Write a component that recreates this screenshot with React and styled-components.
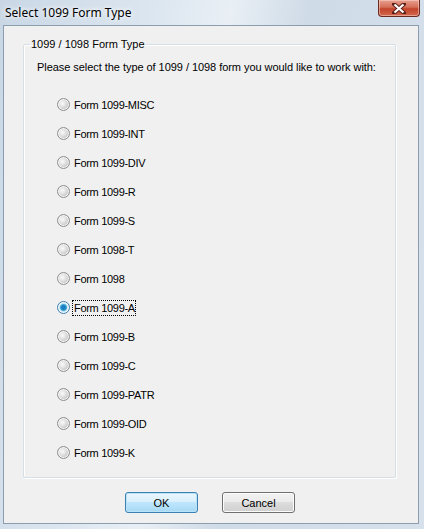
import React, { useState } from 'react';
import styled, { createGlobalStyle } from 'styled-components';

const Global = createGlobalStyle`
  html, body { margin: 0; padding: 0; }
  body {
    width: 424px;
    height: 529px;
    overflow: hidden;
    font-family: "Liberation Sans", Arial, sans-serif;
  }
`;

const Window = styled.div`
  width: 424px;
  height: 529px;
  box-sizing: border-box;
  display: flex;
  flex-direction: column;
  background: linear-gradient(100deg, #c9d7e5 0%, #dce6f0 30%, #e9eff5 45%, #cfdbe7 60%, #d6e1ec 100%);
  padding: 0 5px 5px 3px;
`;

const TitleBar = styled.div`
  height: 25px;
  display: flex;
  align-items: flex-start;
  justify-content: space-between;
`;

const Title = styled.div`
  font-family: "Noto Sans", "Open Sans", sans-serif;
  font-size: 12px;
  color: #000;
  padding: 4px 0 0 2px;
  text-shadow: 0 0 6px #fff, 0 0 4px #fff;
`;

const CloseButton = styled.div`
  width: 42px;
  height: 17px;
  margin-right: -1px;
  box-sizing: border-box;
  border: 1px solid #6b2a22;
  border-top: none;
  border-radius: 0 0 4px 4px;
  background: linear-gradient(180deg, #e8a08f 0%, #d46e58 45%, #c2432a 55%, #d0684e 100%);
  box-shadow: inset 0 0 0 1px rgba(255, 220, 210, 0.5);
  display: flex;
  align-items: center;
  justify-content: center;
`;

const Client = styled.div`
  flex: 1;
  background: #f0f0f0;
  border: 1px solid #8d9db0;
  display: flex;
  flex-direction: column;
  padding: 0 22px 0 19px;
`;

const Group = styled.fieldset`
  margin: 12px 0 0 0;
  padding: 0 0 0 13px;
  height: 440px;
  box-sizing: border-box;
  border: 1px solid #d5dfe5;
  box-shadow: inset 1px 1px 0 #fff, 1px 1px 0 #fff;
  border-radius: 2px;
`;

const Legend = styled.legend`
  font-size: 11px;
  color: #000;
  padding: 0 1px 0 1px;
  margin-left: -7px;
`;

const Prompt = styled.div`
  font-size: 11px;
  color: #000;
  margin-top: 11px;
  margin-bottom: 17px;
  letter-spacing: -0.05px;
`;

const List = styled.div`
  display: grid;
  grid-auto-rows: 29px;
  padding-left: 20px;
`;

const Row = styled.label`
  display: flex;
  align-items: center;
  gap: 2px;
  font-size: 11px;
  color: #000;
  cursor: default;
`;

const Radio = styled.span`
  width: 11px;
  height: 11px;
  border-radius: 50%;
  border: 1px solid ${p => (p.$on ? '#3c7fb1' : '#8e8f8f')};
  background: ${p =>
    p.$on
      ? 'radial-gradient(circle at 50% 50%, #1b7fbf 0 2px, #3fa9d8 3px, #bfe3f4 4px, #eaf6fc 5px)'
      : 'radial-gradient(circle at 40% 40%, #f4f4f4 0 1px, #dcdcdc 4px, #c6c6c6 6px)'};
  box-shadow: inset 0 0 0 1px #f6f6f6;
  flex: none;
`;

const Caption = styled.span`
  padding: 1px 0 1px 1px;
  border: 1px dotted ${p => (p.$focus ? '#000' : 'transparent')};
  letter-spacing: -0.3px;
`;

const Buttons = styled.div`
  display: flex;
  justify-content: center;
  gap: 24px;
  margin-top: 14px;
  padding-left: 1px;
`;

const Button = styled.button`
  width: 73px;
  height: 21px;
  box-sizing: border-box;
  font-family: "Liberation Sans", Arial, sans-serif;
  font-size: 11px;
  color: #000;
  border-radius: 3px;
  border: 1px solid ${p => (p.$default ? '#3c7fb1' : '#707070')};
  background: ${p =>
    p.$default
      ? 'linear-gradient(180deg, #eaf6fd 0%, #d9f0fc 45%, #bee6fd 50%, #a7d9f5 100%)'
      : 'linear-gradient(180deg, #f2f2f2 0%, #ebebeb 45%, #dddddd 50%, #cfcfcf 100%)'};
  box-shadow: inset 0 0 0 1px ${p => (p.$default ? '#b9e3f9' : '#fcfcfc')};
  padding: 0;
`;

const forms = [
  'Form 1099-MISC',
  'Form 1099-INT',
  'Form 1099-DIV',
  'Form 1099-R',
  'Form 1099-S',
  'Form 1098-T',
  'Form 1098',
  'Form 1099-A',
  'Form 1099-B',
  'Form 1099-C',
  'Form 1099-PATR',
  'Form 1099-OID',
  'Form 1099-K',
];

export default function App() {
  const [selected, setSelected] = useState('Form 1099-A');
  return (
    <Window>
      <Global />
      <TitleBar>
        <Title>Select 1099 Form Type</Title>
        <CloseButton>
          <svg width="14" height="11" viewBox="0 0 14 11">
            <path d="M2 1 L12 10 M12 1 L2 10" stroke="#5a1f17" strokeWidth="4" strokeLinecap="square" />
            <path d="M2.5 1.5 L11.5 9.5 M11.5 1.5 L2.5 9.5" stroke="#fff" strokeWidth="2.2" />
          </svg>
        </CloseButton>
      </TitleBar>
      <Client>
        <Group>
          <Legend>1099 / 1098 Form Type</Legend>
          <Prompt>Please select the type of 1099 / 1098 form you would like to work with:</Prompt>
          <List>
            {forms.map(f => (
              <Row key={f} onClick={() => setSelected(f)}>
                <Radio $on={selected === f} />
                <Caption $focus={selected === f}>{f}</Caption>
              </Row>
            ))}
          </List>
        </Group>
        <Buttons>
          <Button $default>OK</Button>
          <Button>Cancel</Button>
        </Buttons>
      </Client>
    </Window>
  );
}
